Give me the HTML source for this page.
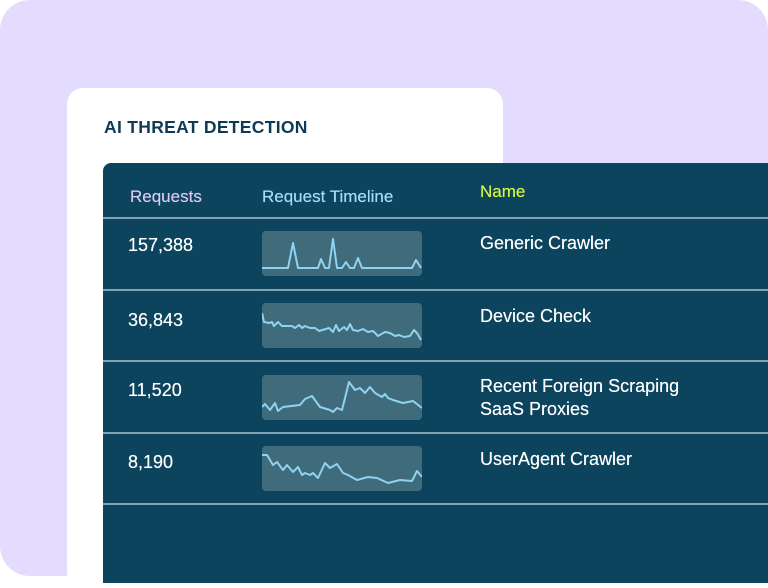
<!DOCTYPE html>
<html><head><meta charset="utf-8"><style>
body{margin:0;width:768px;height:576px;position:relative;overflow:hidden;background:#fff;font-family:"Liberation Sans",sans-serif}
.a{position:absolute}
.t{position:absolute;font-size:18px;color:#fff;white-space:nowrap;line-height:20px;text-shadow:0 0 0.4px #fff}
.h{font-size:17px}
.line{position:absolute;left:103px;width:665px;height:2px;background:#7fa3b3}
.box{position:absolute;left:262px;width:160px;height:45px;background:#3f6b7b;border-radius:4px}
.box svg{position:absolute;left:0;top:0}
polyline{fill:none;stroke:#8fd3f2;stroke-width:2;stroke-linejoin:round}
</style></head><body>
<div class="a" style="left:0;top:0;width:768px;height:576px;background:#e4dcfe;border-radius:30px"></div>
<div class="a" style="left:67px;top:88px;width:436px;height:500px;background:#fff;border-radius:16px"></div>
<div class="t" style="left:104px;top:117px;color:#0d3b55;font-size:17.5px;font-weight:bold;letter-spacing:0.3px;text-shadow:none">AI THREAT DETECTION</div>
<div class="a" style="left:103px;top:163px;width:680px;height:420px;background:#0c445e;border-radius:8px 0 0 0"></div>
<div class="t h" style="left:130px;top:187px;color:#d9c8f5;text-shadow:0 0 0.4px #d9c8f5">Requests</div>
<div class="t h" style="left:262px;top:187px;color:#a5dcf5;text-shadow:0 0 0.4px #a5dcf5">Request Timeline</div>
<div class="t h" style="left:480px;top:182px;color:#d6f542;text-shadow:0 0 0.4px #d6f542">Name</div>
<div class="line" style="top:217px"></div>
<div class="line" style="top:289px"></div>
<div class="line" style="top:360px"></div>
<div class="line" style="top:432px"></div>
<div class="line" style="top:503px"></div>

<div class="t" style="left:128px;top:235px">157,388</div>
<div class="t" style="left:128px;top:310px">36,843</div>
<div class="t" style="left:128px;top:380px">11,520</div>
<div class="t" style="left:128px;top:452px">8,190</div>

<div class="t" style="left:480px;top:233px">Generic Crawler</div>
<div class="t" style="left:480px;top:306px">Device Check</div>
<div class="t" style="left:480px;top:376px">Recent Foreign Scraping</div>
<div class="t" style="left:480px;top:399px">SaaS Proxies</div>
<div class="t" style="left:480px;top:449px">UserAgent Crawler</div>

<div class="box" style="top:231px"><svg width="160" height="45"><polyline points="0,37 26,37 31,12 36,37 56,37 59,28 63,37 67,37 71,8 75,37 80,37 84,31 88,37 92,37 96,27 100,37 150,37 154,29 159,37"/></svg></div>
<div class="box" style="top:303px"><svg width="160" height="45"><polyline points="0,10 2,19 7,20 10,19 12,23 16,19 20,23 30,23 33,25 37,22 40,25 43,23 48,25 53,25 57,28 67,25 71,29 74,22 77,28 82,24 85,27 88,21 91,27 96,28 101,26 106,29 111,28 116,33 123,29 128,30 133,33 137,32 142,34 148,33 152,27 155,30 159,37"/></svg></div>
<div class="box" style="top:375px"><svg width="160" height="45"><polyline points="0,32 3,29 8,35 13,28 16,36 21,32 38,30 43,24 50,21 58,32 68,35 71,37 75,33 80,35 87,7 93,15 98,13 103,18 108,12 113,18 120,22 123,19 126,23 131,25 141,28 151,26 160,33"/></svg></div>
<div class="box" style="top:446px"><svg width="160" height="45"><polyline points="0,9 5,9 11,19 15,16 21,24 25,19 31,26 36,21 40,29 43,27 48,29 51,27 56,32 63,17 68,22 75,18 81,27 86,29 95,34 106,31 115,32 126,37 138,34 150,35 155,25 160,31"/></svg></div>
</body></html>
